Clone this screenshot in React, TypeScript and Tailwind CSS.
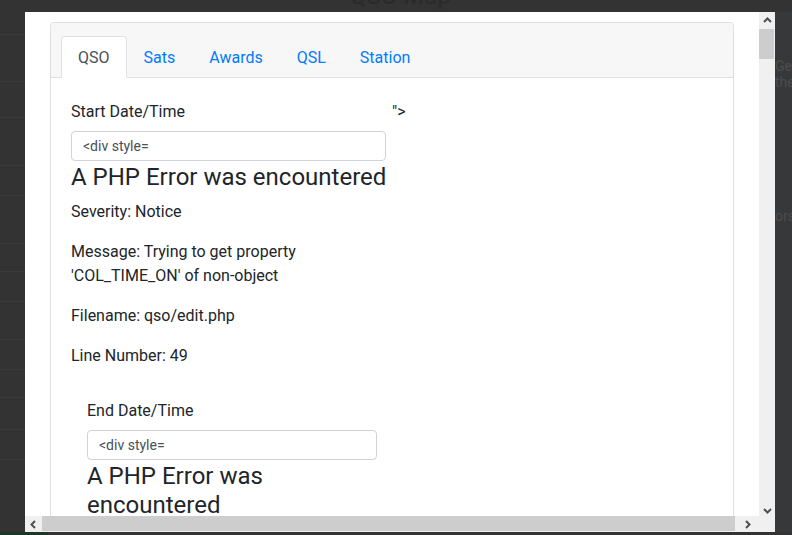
import React from 'react';

const font = { fontFamily: 'Roboto, "Open Sans", Arial, sans-serif' };

const tabs = ['QSO', 'Sats', 'Awards', 'QSL', 'Station'];

const Chevron = ({ dir }: { dir: 'up' | 'down' | 'left' | 'right' }) => {
  const pts = {
    up: '1,6 4.5,2.5 8,6',
    down: '1,3 4.5,6.5 8,3',
    left: '6,1 2.5,4.5 6,8',
    right: '3,1 6.5,4.5 3,8',
  }[dir];
  return (
    <svg width="9" height="9" viewBox="0 0 9 9">
      <polyline points={pts} fill="none" stroke="#505050" strokeWidth="2" />
    </svg>
  );
};

const ErrorBlock = ({ label, wrap }: { label: string; wrap?: boolean }) => (
  <div>
    <label className="block text-[16px] leading-[24px] text-[#212529] mb-[7px]">{label}</label>
    <div className="h-[30px] border border-[#ced4da] rounded-[4px] pl-[11px] flex items-center text-[14px] text-[#495057]">
      &lt;div style=
    </div>
    <h4 className={`mt-[2px] mb-[8px] text-[24px] leading-[29px] font-normal text-[#212529] ${wrap ? 'w-[200px]' : 'whitespace-nowrap'}`}>
      A PHP Error was encountered
    </h4>
  </div>
);

export default function App() {
  return (
    <div className="relative w-[792px] h-[535px] overflow-hidden bg-[#333333]" style={font}>
      {/* page behind the overlay */}
      <div className="absolute left-0 top-0 w-[25px] h-[532px] flex flex-col">
        {[35, 47, 36, 48, 30, 48, 28, 30, 38, 30, 28, 32, 30].map((h, i) => (
          <div key={i} className="border-b border-[#3a3a3a]" style={{ height: h }} />
        ))}
      </div>
      <div className="absolute left-[350px] top-[-22px] text-[24px] text-[#2a2a2a]">QSO Map</div>
      <div className="absolute left-[775px] top-[12px] w-[17px] h-[520px] bg-[#36383a] text-[14px] text-[#4d4d4d] leading-[16px] pt-[46px] overflow-hidden">
        <div>Ge</div>
        <div>the</div>
        <div className="mt-[118px]">ors,</div>
      </div>
      <div className="absolute left-0 top-[532px] w-[48px] h-[3px] bg-[#1e3527]" />

      {/* modal */}
      <div className="relative pl-[25px] pt-[12px]">
        <div className="flex w-[750px] h-[520px] bg-white">
          <div className="flex flex-col w-[734px]">
            <div className="h-[504px] overflow-hidden pt-[10px] pl-[25px]">
              <div className="w-[684px] h-[600px] border border-[#dfdfdf] rounded-[4px]">
                <div className="h-[55px] bg-[#f7f7f7] border-b border-[#dee2e6] rounded-t-[4px] pt-[12px] pl-[10px] flex items-end">
                  <div className="flex -mb-[1px]">
                    {tabs.map((t, i) => (
                      <div
                        key={t}
                        className={
                          i === 0
                            ? 'px-[16px] h-[42px] pt-[2px] flex items-center border border-[#dee2e6] border-b-white bg-white rounded-t-[4px] text-[16px] text-[#495057]'
                            : 'px-[16px] h-[42px] pt-[2px] flex items-center border border-transparent text-[16px] text-[#007bff]'
                        }
                      >
                        {t}
                      </div>
                    ))}
                  </div>
                </div>
                <div className="pt-[22px] pl-[20px] flex items-start">
                  <div className="w-[315px]">
                    <ErrorBlock label="Start Date/Time" />
                    <div className="text-[16px] leading-[24px] text-[#212529]">
                      <p className="mb-[16px]">Severity: Notice</p>
                      <p className="mb-[16px]">
                        Message: Trying to get property
                        <br />
                        'COL_TIME_ON' of non-object
                      </p>
                      <p className="mb-[16px]">Filename: qso/edit.php</p>
                      <p className="mb-[16px]">Line Number: 49</p>
                    </div>
                    <div className="ml-[16px] w-[290px] mt-[31px]">
                      <ErrorBlock label="End Date/Time" wrap />
                    </div>
                  </div>
                  <div className="ml-[6px] text-[16px] leading-[24px] text-[#212529]">"&gt;</div>
                </div>
              </div>
            </div>
            {/* horizontal scrollbar */}
            <div className="h-[16px] flex bg-[#f0f0f0]">
              <div className="w-[17px] flex items-center justify-center"><Chevron dir="left" /></div>
              <div className="w-[693px] h-[15px] bg-[#cdcdcd]" />
              <div className="flex-1 flex items-center justify-center"><Chevron dir="right" /></div>
            </div>
          </div>
          {/* vertical scrollbar */}
          <div className="w-[16px] bg-[#f0f0f0] flex flex-col">
            <div className="h-[17px] flex items-center justify-center"><Chevron dir="up" /></div>
            <div className="w-[15px] h-[30px] bg-[#cdcdcd]" />
            <div className="flex-1" />
            <div className="h-[24px] flex items-start justify-center pt-[2px] mb-[4px]"><Chevron dir="down" /></div>
          </div>
        </div>
      </div>
    </div>
  );
}
